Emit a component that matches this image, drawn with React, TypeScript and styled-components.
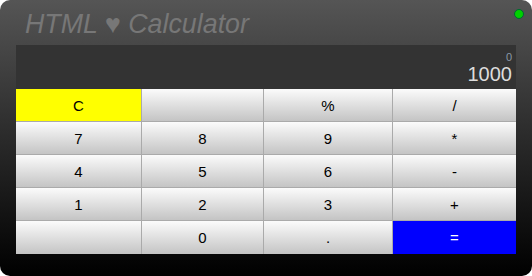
import * as React from 'react'
import styled, { createGlobalStyle } from 'styled-components'

const GlobalStyle = createGlobalStyle`
  html, body {
    margin: 0;
    padding: 0;
    background: #fff;
  }
`

const Calculator = styled.div`
  width: 532px;
  height: 276px;
  box-sizing: border-box;
  border-radius: 10px;
  background: linear-gradient(to bottom, #555 0%, #000 100%);
  padding: 0 16px;
  display: flex;
  flex-direction: column;
  position: relative;
  font-family: 'Liberation Sans', Arial, sans-serif;
`

const Title = styled.h1`
  margin: 0;
  height: 45px;
  padding: 9px 0 0 9px;
  box-sizing: border-box;
  font-size: 26.8px;
  font-weight: normal;
  font-style: italic;
  color: #777;
  line-height: 30px;
`

const Led = styled.span`
  position: absolute;
  top: 9px;
  right: 8px;
  width: 8px;
  height: 8px;
  border-radius: 50%;
  background: #00d000;
  border: 1px solid #063;
`

const Display = styled.div`
  height: 44px;
  background: #333;
  display: flex;
  flex-direction: column;
  align-items: flex-end;
  padding: 6px 4px 0 0;
  box-sizing: border-box;
`

const Memory = styled.div`
  font-size: 11px;
  line-height: 12px;
  color: #8a9aa6;
`

const Value = styled.div`
  font-size: 20px;
  line-height: 22px;
  color: #ddd;
`

const Keys = styled.div`
  display: grid;
  grid-template-columns: 126px 122px 129px 123px;
  grid-auto-rows: 33px;
  background: #aaa;
`

const Key = styled.button<{ $tone?: 'clear' | 'equals' }>`
  border: none;
  border-right: 1px solid #aaa;
  border-bottom: 1px solid #aaa;
  margin: 0;
  padding: 0;
  font-family: inherit;
  font-size: 15px;
  color: ${p => (p.$tone === 'equals' ? '#fff' : '#000')};
  background: ${p =>
    p.$tone === 'clear'
      ? '#ff0'
      : p.$tone === 'equals'
        ? '#00f'
        : 'linear-gradient(to bottom, #fbfbfb 0%, #c4c4c4 100%)'};
  &:nth-child(4n) {
    border-right: none;
  }
  &:nth-last-child(-n + 4) {
    border-bottom: none;
  }
`

const keys: { label: string; tone?: 'clear' | 'equals' }[] = [
  { label: 'C', tone: 'clear' },
  { label: '' },
  { label: '%' },
  { label: '/' },
  { label: '7' },
  { label: '8' },
  { label: '9' },
  { label: '*' },
  { label: '4' },
  { label: '5' },
  { label: '6' },
  { label: '-' },
  { label: '1' },
  { label: '2' },
  { label: '3' },
  { label: '+' },
  { label: '' },
  { label: '0' },
  { label: '.' },
  { label: '=', tone: 'equals' },
]

export default function App() {
  return (
    <>
      <GlobalStyle />
      <Calculator>
        <Title>HTML ♥ Calculator</Title>
        <Led />
        <Display>
          <Memory>0</Memory>
          <Value>1000</Value>
        </Display>
        <Keys>
          {keys.map((k, i) => (
            <Key key={i} $tone={k.tone}>
              {k.label}
            </Key>
          ))}
        </Keys>
      </Calculator>
    </>
  )
}
